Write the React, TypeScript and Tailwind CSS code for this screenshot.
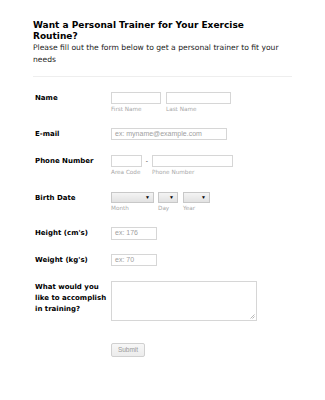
import React from 'react';

const verdana = "font-['DejaVu_Sans',Verdana,sans-serif]";
const arial = "font-['Liberation_Sans',Arial,sans-serif]";

function Sub({ children, className = '' }: { children: React.ReactNode; className?: string }) {
  return <div className={`${verdana} text-[5.7px] leading-[8px] text-[#a8a8a8] ${className}`}>{children}</div>;
}

function Box({ w, placeholder, h = 'h-[12px]' }: { w: string; placeholder?: string; h?: string }) {
  return (
    <div className={`${w} ${h} border border-[#d6d6d6] bg-white ${arial} text-[7px] leading-[10px] text-[#a0a0a0] px-[3px]`}>
      {placeholder}
    </div>
  );
}

function Select({ w }: { w: string }) {
  return (
    <div className={`${w} h-[11px] border border-[#c8c8c8] bg-gradient-to-b from-[#f4f4f4] to-[#e2e2e2] flex items-center justify-end pr-[3px]`}>
      <span className="text-[5px] leading-none text-black">▼</span>
    </div>
  );
}

function Row({ label, h, children }: { label: React.ReactNode; h: string; children: React.ReactNode }) {
  return (
    <div className={`flex ${h}`}>
      <div className={`w-[111px] shrink-0 pl-[35px] pr-[4px] ${verdana} font-bold text-[7px] leading-[11px] text-black mt-[1px]`}>{label}</div>
      <div className="flex-1">{children}</div>
    </div>
  );
}

export default function App() {
  return (
    <div className="w-[325px] h-[400px] bg-white overflow-hidden">
      <div className="pl-[33px] pr-[33px] pt-[20px]">
        <div className="w-[250px]">
          <h1 className={`${verdana} font-bold text-[9px] leading-[11px] text-black`}>
            Want a Personal Trainer for Your Exercise Routine?
          </h1>
          <p className={`${verdana} text-[7.6px] leading-[11.5px] text-[#222]`}>
            Please fill out the form below to get a personal trainer to fit your needs
          </p>
        </div>
        <div className="mt-[11px] h-px bg-[#eeeeee]" />
      </div>

      <div className="mt-[15px]">
        <Row label="Name" h="h-[36px]">
          <div className="flex gap-[5px]">
            <div>
              <Box w="w-[50px]" />
              <Sub className="mt-[1px]">First Name</Sub>
            </div>
            <div>
              <Box w="w-[65px]" />
              <Sub className="mt-[1px]">Last Name</Sub>
            </div>
          </div>
        </Row>
        <Row label="E-mail" h="h-[27px]">
          <Box w="w-[116px]" placeholder="ex: myname@example.com" />
        </Row>
        <Row label="Phone Number" h="h-[37px]">
          <div className="flex">
            <div>
              <Box w="w-[31px]" />
              <Sub className="mt-[1px]">Area Code</Sub>
            </div>
            <div className="w-[10px] text-center text-[7px] leading-[12px] text-[#555]">-</div>
            <div>
              <Box w="w-[81px]" />
              <Sub className="mt-[1px]">Phone Number</Sub>
            </div>
          </div>
        </Row>
        <Row label="Birth Date" h="h-[35px]">
          <div className="flex gap-[4px]">
            <div>
              <Select w="w-[43px]" />
              <Sub className="mt-[1px]">Month</Sub>
            </div>
            <div>
              <Select w="w-[20px]" />
              <Sub className="mt-[1px]">Day</Sub>
            </div>
            <div className="ml-[1px]">
              <Select w="w-[27px]" />
              <Sub className="mt-[1px]">Year</Sub>
            </div>
          </div>
        </Row>
        <Row label="Height (cm's)" h="h-[27px]">
          <Box w="w-[46px]" h="h-[13px]" placeholder="ex: 176" />
        </Row>
        <Row label="Weight (kg's)" h="h-[27px]">
          <Box w="w-[46px]" placeholder="ex: 70" />
        </Row>
        <Row label="What would you like to accomplish in training?" h="h-[62px]">
          <div className="relative w-[146px] h-[40px] border border-[#d6d6d6] bg-white">
            <svg className="absolute right-[1px] bottom-[1px]" width="5" height="5" viewBox="0 0 5 5">
              <path d="M4.5 0.5 L0.5 4.5 M4.5 2.5 L2.5 4.5" stroke="#999" strokeWidth="0.7" />
            </svg>
          </div>
        </Row>
        <div className="flex pl-[111px]">
          <button className={`w-[34px] h-[14px] border border-[#d0d0d0] rounded-[2px] bg-gradient-to-b from-[#f7f7f7] to-[#ececec] ${arial} text-[6.5px] leading-[12px] text-[#999]`}>
            Submit
          </button>
        </div>
      </div>
    </div>
  );
}
